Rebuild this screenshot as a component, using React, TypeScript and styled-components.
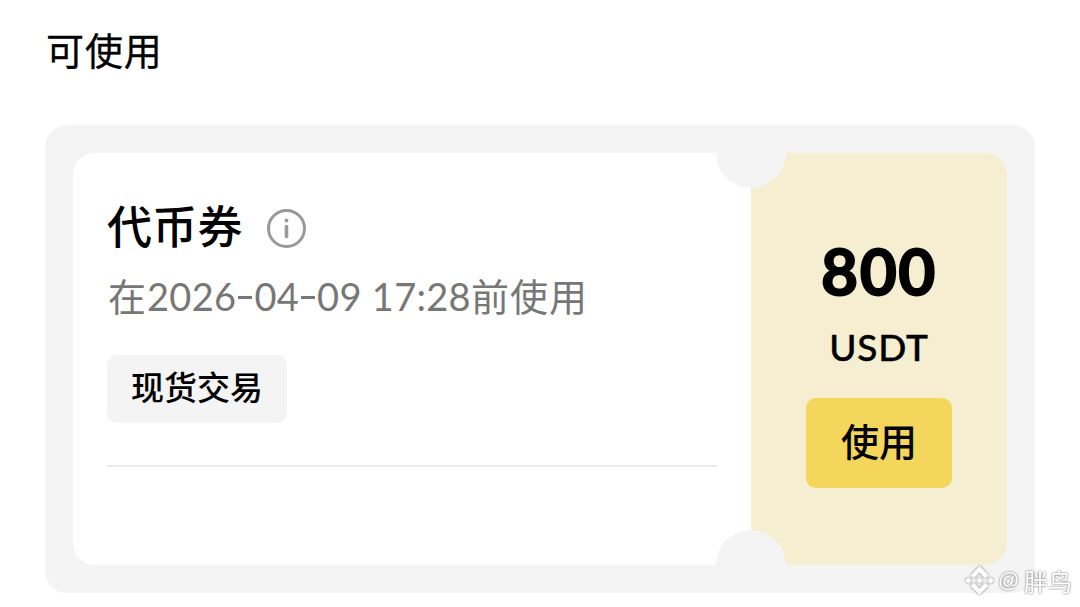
import React from "react";
import styled, { createGlobalStyle } from "styled-components";
import { SiBinance } from "react-icons/si";

function InfoIcon() {
  return (
    <svg width="39" height="39" viewBox="0 0 39 39" fill="none">
      <circle cx="19.5" cy="19.5" r="18" stroke="#999999" strokeWidth="3" />
      <circle cx="19.5" cy="11.5" r="1.9" fill="#999999" />
      <path d="M19.5 17.5V27.5" stroke="#999999" strokeWidth="3.6" strokeLinecap="round" />
    </svg>
  );
}

function App() {
  return (
    <Page>
      <GlobalStyle />
      <Heading>可使用</Heading>
      <Frame>
        <Voucher>
          <Details>
            <TitleRow>
              <Title>代币券</Title>
              <InfoIcon />
            </TitleRow>
            <Expiry>
              在<Numerals>2026</Numerals>
              <Dash />
              <Numerals>04</Numerals>
              <Dash />
              <Numerals>09 17:28</Numerals>前使用
            </Expiry>
            <Tag>现货交易</Tag>
            <Divider />
          </Details>
          <Reward>
            <Amount>800</Amount>
            <Currency>USDT</Currency>
            <UseButton>使用</UseButton>
          </Reward>
          <Notch $side="top" />
          <Notch $side="bottom" />
        </Voucher>
      </Frame>
      <Watermark>
        <SiBinance size={29} />
        <At>@</At>
        <span>胖鸟</span>
      </Watermark>
    </Page>
  );
}

export default App;

const GlobalStyle = createGlobalStyle`
  body {
    margin: 0;
    background: #ffffff;
  }
  * {
    box-sizing: border-box;
  }
`;

const Page = styled.main`
  position: relative;
  width: 1080px;
  height: 607px;
  padding: 23px 45px 0;
  overflow: hidden;
  color: #020202;
  font-family: "Lato", "Noto Sans CJK SC", sans-serif;
`;

const Heading = styled.h1`
  margin: 0 0 48px 1px;
  font-size: 38px;
  font-weight: 400;
  line-height: 54px;
  letter-spacing: 0.9px;
  -webkit-text-stroke: 0.3px currentColor;
`;

const Frame = styled.section`
  height: 468px;
  padding: 28px;
  background: #f4f4f4;
  border-radius: 22px;
`;

const Voucher = styled.article`
  position: relative;
  display: flex;
  height: 412px;
`;

const Details = styled.div`
  width: 678px;
  padding: 44px 34px 0;
  background: #ffffff;
  border-radius: 22px 0 0 22px;
`;

const TitleRow = styled.div`
  display: flex;
  align-items: center;
  gap: 24px;
  height: 62px;
`;

const Title = styled.h2`
  margin: 0;
  padding-bottom: 2px;
  font-size: 45px;
  font-weight: 500;
  line-height: 60px;
  letter-spacing: 0.2px;
`;

const Expiry = styled.p`
  display: flex;
  align-items: center;
  margin: 10px 0 0 1px;
  height: 54px;
  color: #777775;
  font-size: 38px;
  line-height: 54px;
  letter-spacing: 1px;
  white-space: pre;
`;

const Numerals = styled.span`
  letter-spacing: 0.3px;
`;

const Dash = styled.i`
  width: 14px;
  height: 3px;
  margin: 3px 2px 0 2px;
  background: currentColor;
`;

const Tag = styled.div`
  display: flex;
  align-items: center;
  justify-content: center;
  width: 180px;
  height: 68px;
  margin-top: 32px;
  padding-bottom: 6px;
  background: #f4f4f4;
  border-radius: 10px;
  font-size: 33px;
  font-weight: 500;
`;

const Divider = styled.hr`
  height: 2px;
  margin: 42px 0 0;
  border: 0;
  background: #ececea;
`;

const Reward = styled.div`
  display: flex;
  flex-direction: column;
  align-items: center;
  width: 256px;
  padding-top: 78px;
  background: #f6eed1;
  border-radius: 0 22px 22px 0;
`;

const Amount = styled.strong`
  font-size: 64px;
  font-weight: 700;
  line-height: 80px;
  letter-spacing: 1.6px;
  -webkit-text-stroke: 1.8px currentColor;
`;

const Currency = styled.span`
  margin-top: 11px;
  font-size: 37px;
  font-weight: 500;
  line-height: 50px;
  letter-spacing: 0.8px;
  -webkit-text-stroke: 0.4px currentColor;
`;

const UseButton = styled.button`
  width: 146px;
  height: 90px;
  margin-top: 26px;
  padding: 0 0 7px;
  border: 0;
  border-radius: 10px;
  background: #f5d65d;
  color: inherit;
  font-family: inherit;
  font-size: 38px;
  font-weight: 500;
`;

// half circles cut into the seam between the two halves
const Notch = styled.div<{ $side: "top" | "bottom" }>`
  position: absolute;
  left: 643px;
  ${(props) => props.$side}: 0;
  width: 70px;
  height: 35px;
  background: #f4f4f4;
  border-radius: ${(props) =>
    props.$side === "top" ? "0 0 35px 35px" : "35px 35px 0 0"};
`;

const Watermark = styled.div`
  position: absolute;
  left: 965px;
  top: 564px;
  display: flex;
  align-items: center;
  gap: 4px;
  height: 32px;
  color: #ffffff;
  font-size: 24px;
  white-space: nowrap;
  filter: drop-shadow(0.6px 0.6px 0.9px #666666);
`;

const At = styled.span`
  width: 22px;
  font-family: "Liberation Sans", sans-serif;
  font-size: 21px;
`;
